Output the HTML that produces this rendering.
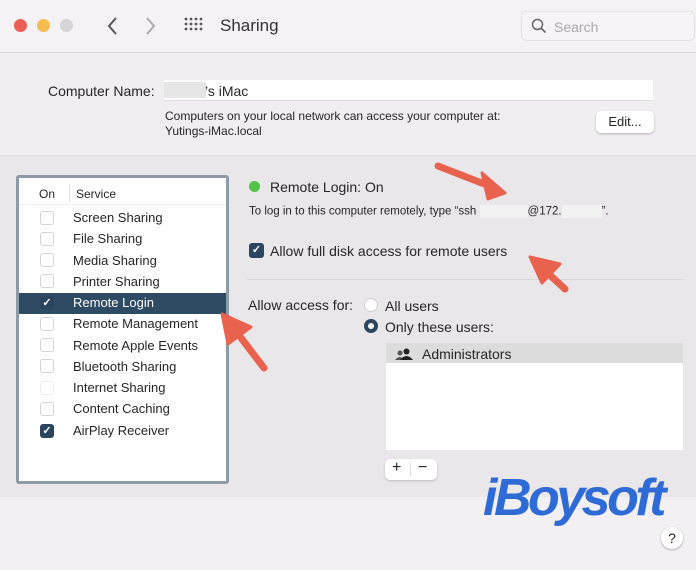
<!DOCTYPE html>
<html><head><meta charset="utf-8"><style>
*{margin:0;padding:0;box-sizing:border-box}
body{width:696px;height:570px;overflow:hidden;background:#f2f0f2;font-family:"Liberation Sans",sans-serif;color:#262626;position:relative;font-size:13px}
.a{position:absolute}
.cb{position:absolute;width:14px;height:14px;border:1px solid #d4d4d4;border-radius:3px;background:#fff}
.cbc{background:#2c4560;border-color:#2c4560;color:#fff;font-size:11px;line-height:12px;text-align:center;font-weight:bold}
.row{position:absolute;left:73px;font-size:13px}
</style></head><body>
<div class="a" style="left:0;top:0;width:696px;height:53px;background:#f4f2f4;border-bottom:1px solid #dcdadc"></div>
<div class="a" style="left:14px;top:19px;width:13px;height:13px;border-radius:50%;background:#ec5f57"></div>
<div class="a" style="left:37px;top:19px;width:13px;height:13px;border-radius:50%;background:#f4bd4f"></div>
<div class="a" style="left:60px;top:19px;width:13px;height:13px;border-radius:50%;background:#d6d4d6"></div>
<svg class="a" style="left:100px;top:14px" width="70" height="24"><path d="M16 4 L9 12 L16 20" stroke="#555" stroke-width="2" fill="none"/><path d="M47 4 L54 12 L47 20" stroke="#aaa" stroke-width="2" fill="none"/></svg>
<svg class="a" style="left:184px;top:17px" width="20" height="18"><g fill="#555"><circle cx="2" cy="2" r="1.4"/><circle cx="7" cy="2" r="1.4"/><circle cx="12" cy="2" r="1.4"/><circle cx="17" cy="2" r="1.4"/><circle cx="2" cy="7" r="1.4"/><circle cx="7" cy="7" r="1.4"/><circle cx="12" cy="7" r="1.4"/><circle cx="17" cy="7" r="1.4"/><circle cx="2" cy="12" r="1.4"/><circle cx="7" cy="12" r="1.4"/><circle cx="12" cy="12" r="1.4"/><circle cx="17" cy="12" r="1.4"/></g></svg>
<div class="a" style="left:220px;top:16px;font-size:17px;color:#333">Sharing</div>
<div class="a" style="left:521px;top:11px;width:174px;height:30px;border:1px solid #e2e0e2;border-radius:6px;background:#f6f4f6"></div>
<svg class="a" style="left:531px;top:18px" width="16" height="16"><circle cx="6.5" cy="6.5" r="5" stroke="#666" stroke-width="1.5" fill="none"/><path d="M10 10 L14.5 14.5" stroke="#666" stroke-width="1.6"/></svg>
<div class="a" style="left:554px;top:19px;font-size:14px;color:#aaa">Search</div>
<div class="a" style="left:0;top:54px;width:696px;height:101px;background:#f0eef0"></div>
<div class="a" style="left:48px;top:83px;font-size:14px">Computer Name:</div>
<div class="a" style="left:164px;top:80px;width:489px;height:21px;background:#fff;border-bottom:1px solid #ddd"></div>
<div class="a" style="left:164px;top:82px;width:42px;height:16px;background:#e6e6e6"></div>
<div class="a" style="left:205px;top:83px;font-size:14px">’s iMac</div>
<div class="a" style="left:165px;top:109px;font-size:12px;line-height:15px">Computers on your local network can access your computer at:<br>Yutings-iMac.local</div>
<div class="a" style="left:596px;top:111px;width:58px;height:22px;background:#fff;border-radius:5px;box-shadow:0 1px 2px rgba(0,0,0,.25);font-size:13px;text-align:center;line-height:22px">Edit...</div>
<div class="a" style="left:0;top:155px;width:696px;height:342px;background:#e9e7e9;border-top:1px solid #e0dee0"></div>
<div class="a" style="left:16px;top:175px;width:213px;height:309px;border:3px solid #8d9aa8;border-radius:3px;background:#fff"></div>
<div class="a" style="left:19px;top:178px;width:207px;height:27px;border-bottom:1px solid #eee"></div>
<div class="a" style="left:39px;top:187px;font-size:12px">On</div>
<div class="a" style="left:69px;top:184px;width:1px;height:18px;background:#ddd"></div>
<div class="a" style="left:76px;top:187px;font-size:12px">Service</div>
<div class="a" style="left:19px;top:293px;width:207px;height:21px;background:#2f4a63"></div>
<div class="cb" style="left:40px;top:211px"></div><div class="row" style="top:210px">Screen Sharing</div>
<div class="cb" style="left:40px;top:232px"></div><div class="row" style="top:231px">File Sharing</div>
<div class="cb" style="left:40px;top:253px"></div><div class="row" style="top:253px">Media Sharing</div>
<div class="cb" style="left:40px;top:274px"></div><div class="row" style="top:274px">Printer Sharing</div>
<div class="cb cbc" style="left:40px;top:296px;background:#2a445e;border-color:#2a445e">✓</div><div class="row" style="top:295px;color:#fff">Remote Login</div>
<div class="cb" style="left:40px;top:317px"></div><div class="row" style="top:316px">Remote Management</div>
<div class="cb" style="left:40px;top:338px"></div><div class="row" style="top:338px">Remote Apple Events</div>
<div class="cb" style="left:40px;top:359px"></div><div class="row" style="top:359px">Bluetooth Sharing</div>
<div class="cb" style="left:40px;top:381px;border-color:#eee"></div><div class="row" style="top:380px">Internet Sharing</div>
<div class="cb" style="left:40px;top:402px"></div><div class="row" style="top:401px">Content Caching</div>
<div class="cb cbc" style="left:40px;top:424px">✓</div><div class="row" style="top:423px">AirPlay Receiver</div>
<div class="a" style="left:249px;top:181px;width:11px;height:11px;border-radius:50%;background:#52c346"></div>
<div class="a" style="left:270px;top:179px;font-size:14px">Remote Login: On</div>
<div class="a" style="left:249px;top:205px;font-size:11.5px">To log in to this computer remotely, type “ssh <span style="display:inline-block;width:48px;height:13px;background:#f2f2f2;vertical-align:middle"></span>@172.<span style="display:inline-block;width:40px;height:13px;background:#f2f2f2;vertical-align:middle"></span>”.</div>
<div class="cb cbc" style="left:249px;top:243px;width:15px;height:15px">✓</div>
<div class="a" style="left:270px;top:243px;font-size:14px">Allow full disk access for remote users</div>
<div class="a" style="left:247px;top:279px;width:436px;height:1px;background:#d8d6d8"></div>
<div class="a" style="left:248px;top:297px;font-size:14px">Allow access for:</div>
<div class="a" style="left:364px;top:298px;width:14px;height:14px;border-radius:50%;background:#fff;border:1px solid #d0d0d0"></div>
<div class="a" style="left:385px;top:298px;font-size:14px">All users</div>
<div class="a" style="left:364px;top:319px;width:14px;height:14px;border-radius:50%;background:#2c4560"><div style="margin:4px;width:6px;height:6px;border-radius:50%;background:#fff"></div></div>
<div class="a" style="left:385px;top:319px;font-size:14px">Only these users:</div>
<div class="a" style="left:386px;top:343px;width:297px;height:107px;background:#fff"></div>
<div class="a" style="left:386px;top:343px;width:297px;height:20px;background:#dcdcdc"></div>
<svg class="a" style="left:395px;top:347px" width="20" height="14"><circle cx="5" cy="6" r="2.5" fill="#555"/><path d="M0 13 Q5 7 9 13Z" fill="#555"/><circle cx="11.5" cy="4.5" r="3" fill="#222"/><path d="M5 13 Q11.5 5 18 13Z" fill="#222"/></svg>
<div class="a" style="left:422px;top:346px;font-size:14px">Administrators</div>
<div class="a" style="left:385px;top:459px;width:52px;height:21px;background:#fff;border-radius:5px;box-shadow:0 1px 2px rgba(0,0,0,.2);font-size:16px"><span style="position:absolute;left:7px;top:0">+</span><span style="position:absolute;left:25px;top:4px;width:1px;height:13px;background:#ddd"></span><span style="position:absolute;left:33px;top:0">−</span></div>
<div class="a" style="left:483px;top:468px;font-size:52px;font-weight:bold;font-style:italic;color:#2f6bd6;letter-spacing:-3.5px">iBoysoft</div>
<div class="a" style="left:661px;top:527px;width:22px;height:22px;border-radius:50%;background:#fff;box-shadow:0 1px 2px rgba(0,0,0,.3);text-align:center;line-height:22px;font-size:14px">?</div>
<svg class="a" style="left:0;top:0" width="696" height="570"><g fill="#e8624e" stroke="#e8624e" stroke-linejoin="round" stroke-linecap="round">
<path d="M438 166 L492 187" stroke-width="7" fill="none"/><path d="M505 193 L482 173 L488 199Z" stroke-width="3"/>
<path d="M565 289 L540 266" stroke-width="7" fill="none"/><path d="M530 257 L542 283 L560 264Z" stroke-width="3"/>
<path d="M264 368 L232 326" stroke-width="7" fill="none"/><path d="M222 314 L228 344 L251 327Z" stroke-width="3"/>
</g></svg>
</body></html>
